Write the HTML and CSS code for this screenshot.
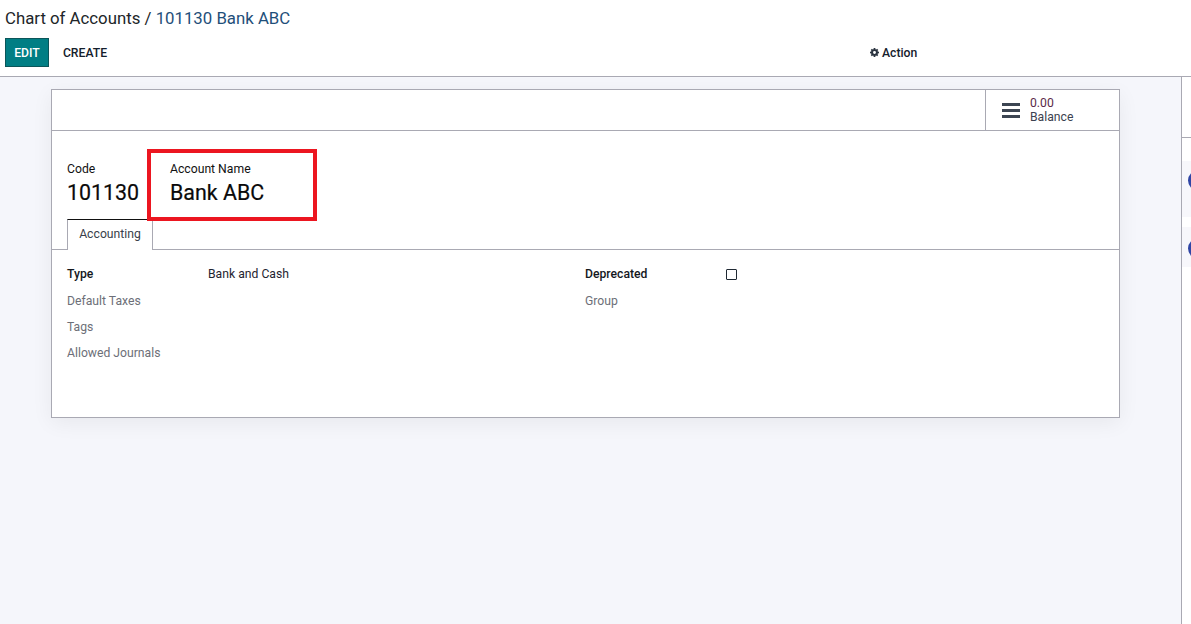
FILE: index.html
```html
<!DOCTYPE html>
<html lang="en">
<head>
<meta charset="utf-8">
<title>Chart of Accounts</title>
<link rel="stylesheet" href="styles.css">
</head>
<body>
<header class="control-panel">
  <h1 class="breadcrumb">Chart of Accounts <span class="crumb-sep">/</span> <span class="crumb-active">101130 Bank ABC</span></h1>
  <div class="toolbar">
    <div class="toolbar-left">
      <button class="btn btn-primary">EDIT</button>
      <button class="btn btn-plain">CREATE</button>
    </div>
    <div class="action">
      <svg class="gear" viewBox="0 0 10 10" aria-hidden="true"><path fill-rule="evenodd" d="M4.1 0h1.8l.2 1.3.8.3 1-.8 1.3 1.3-.8 1 .3.8 1.3.2v1.8l-1.3.2-.3.8.8 1-1.3 1.3-1-.8-.8.3-.2 1.3H4.1l-.2-1.3-.8-.3-1 .8L.8 7.9l.8-1-.3-.8L0 5.9V4.1l1.3-.2.3-.8-.8-1L2.1.8l1 .8.8-.3zM5 3.4a1.6 1.6 0 1 0 0 3.2 1.6 1.6 0 0 0 0-3.2z"/></svg>
      <span>Action</span>
    </div>
  </div>
</header>
<div class="content">
  <main class="form-area">
    <section class="sheet">
      <div class="button-box">
        <div class="stat-button">
          <span class="burger"><i></i><i></i><i></i></span>
          <span class="stat-info"><span class="stat-value">0.00</span><span class="stat-label">Balance</span></span>
        </div>
      </div>
      <div class="title-row">
        <div class="title-field">
          <label class="title-label">Code</label>
          <div class="title-value">101130</div>
        </div>
        <div class="title-field title-name">
          <label class="title-label">Account Name</label>
          <div class="title-value">Bank ABC</div>
        </div>
      </div>
      <div class="tabs"><div class="tab">Accounting</div></div>
      <div class="tab-body">
        <div class="group">
          <div class="row first-row"><span class="key strong">Type</span><span class="val">Bank and Cash</span></div>
          <div class="row"><span class="key">Default Taxes</span></div>
          <div class="row"><span class="key">Tags</span></div>
          <div class="row"><span class="key">Allowed Journals</span></div>
        </div>
        <div class="group group-right">
          <div class="row first-row"><span class="key strong">Deprecated</span><span class="check"></span></div>
          <div class="row"><span class="key">Group</span></div>
        </div>
      </div>
    </section>
    <div class="highlight"></div>
  </main>
  <aside class="chatter">
    <div class="chatter-top"></div>
    <div class="message first"><span class="avatar"></span></div>
    <div class="message second"><span class="avatar"></span></div>
  </aside>
</div>
</body>
</html>
```
FILE: styles.css
```css
* { box-sizing: border-box; }
html, body { height: 100%; }
body {
  margin: 0;
  overflow: hidden;
  background: #f5f6fb;
  color: #212529;
  font-family: Roboto, "Liberation Sans", sans-serif;
  font-size: 12.2px;
  display: flex;
  flex-direction: column;
}
.control-panel {
  height: 77px;
  flex: none;
  background: #fff;
  border-bottom: 1px solid #a9a9b3;
  padding: 8px 0 0 5px;
}
.breadcrumb {
  margin: 0;
  font-size: 16.8px;
  font-weight: 400;
  line-height: 21px;
  color: #212529;
}
.crumb-active { color: #1f4f7a; }
.toolbar {
  display: flex;
  align-items: center;
  margin-top: 9px;
  height: 29px;
}
.toolbar-left { display: flex; width: 865px; }
.btn {
  font-family: inherit;
  font-size: 12.2px;
  font-weight: 500;
  height: 29px;
  border: 1px solid transparent;
  border-radius: 0;
  padding: 0;
  background: none;
}
.btn-primary {
  width: 44px;
  background: #017e84;
  border-color: #0b5559;
  color: #fff;
}
.btn-plain { width: 72px; color: #14202c; }
.action {
  display: flex;
  align-items: center;
  gap: 3px;
  font-weight: 500;
  color: #14202c;
}
.gear { width: 9px; height: 9px; fill: #2b3440; }
.content { flex: 1; display: flex; min-height: 0; }
.form-area { width: 1181px; position: relative; padding: 12px 0 0 51px; }
.sheet {
  width: 1069px;
  height: 329px;
  background: #fff;
  border: 1px solid #a9a9b3;
  box-shadow: 0 5px 20px rgba(0, 0, 0, .06);
}
.button-box {
  height: 41px;
  display: flex;
  justify-content: flex-end;
  border-bottom: 1px solid #a9a9b3;
}
.stat-button {
  width: 134px;
  border-left: 1px solid #a9a9b3;
  display: flex;
  align-items: center;
  padding-left: 16px;
  gap: 10px;
}
.burger { display: flex; flex-direction: column; gap: 3px; width: 18px; }
.burger i { display: block; height: 3px; background: #3c4552; }
.stat-info { display: flex; flex-direction: column; line-height: 14px; }
.stat-value { color: #5c2a4a; }
.stat-label { color: #3c4250; }
.title-row { display: flex; padding: 31px 0 0 15px; height: 88px; }
.title-field { width: 103px; }
.title-label { display: block; font-weight: 400; line-height: 14px; color: #111; }
.title-value { font-size: 21.4px; font-weight: 400; line-height: 29px; color: #0a0a0a; margin-top: 2px; -webkit-text-stroke: .2px #0a0a0a; }
.tabs {
  height: 31px;
  padding-left: 15px;
  border-bottom: 1px solid #a9a9b3;
}
.tab {
  width: 86px;
  height: 31px;
  background: #fff;
  border: 1px solid #a9a9b3;
  border-top-color: #111;
  border-bottom: 0;
  text-align: center;
  line-height: 29px;
  color: #3a3f4a;
}
.tab-body { display: flex; padding: 11px 0 0 15px; }
.group { width: 518px; }
.row { display: flex; align-items: center; height: 26px; }
.first-row { margin-bottom: 1px; }
.key { width: 141px; color: #6d6f78; }
.key.strong { color: #14181d; font-weight: 500; }
.val { color: #1f2430; }
.check { width: 11px; height: 11px; border: 1px solid #1f2933; border-radius: 1px; }
.highlight {
  position: absolute;
  left: 147px;
  top: 72px;
  width: 170px;
  height: 72px;
  border: 4px solid #ec1620;
}
.chatter {
  flex: 1;
  background: #fff;
  border-left: 1px solid #a9a9b3;
  overflow: hidden;
}
.chatter-top { height: 61px; border-bottom: 1px solid #a9a9b3; }
.message {
  background: #f7f7fb;
  display: flex;
  align-items: flex-start;
  padding-left: 6px;
}
.first { height: 56px; margin-top: 23px; padding-top: 9px; }
.second { height: 40px; margin-top: 10px; padding-top: 11px; }
.avatar {
  flex: none;
  width: 21px;
  height: 21px;
  border-radius: 50%;
  background: #2f45a5;
}
```
